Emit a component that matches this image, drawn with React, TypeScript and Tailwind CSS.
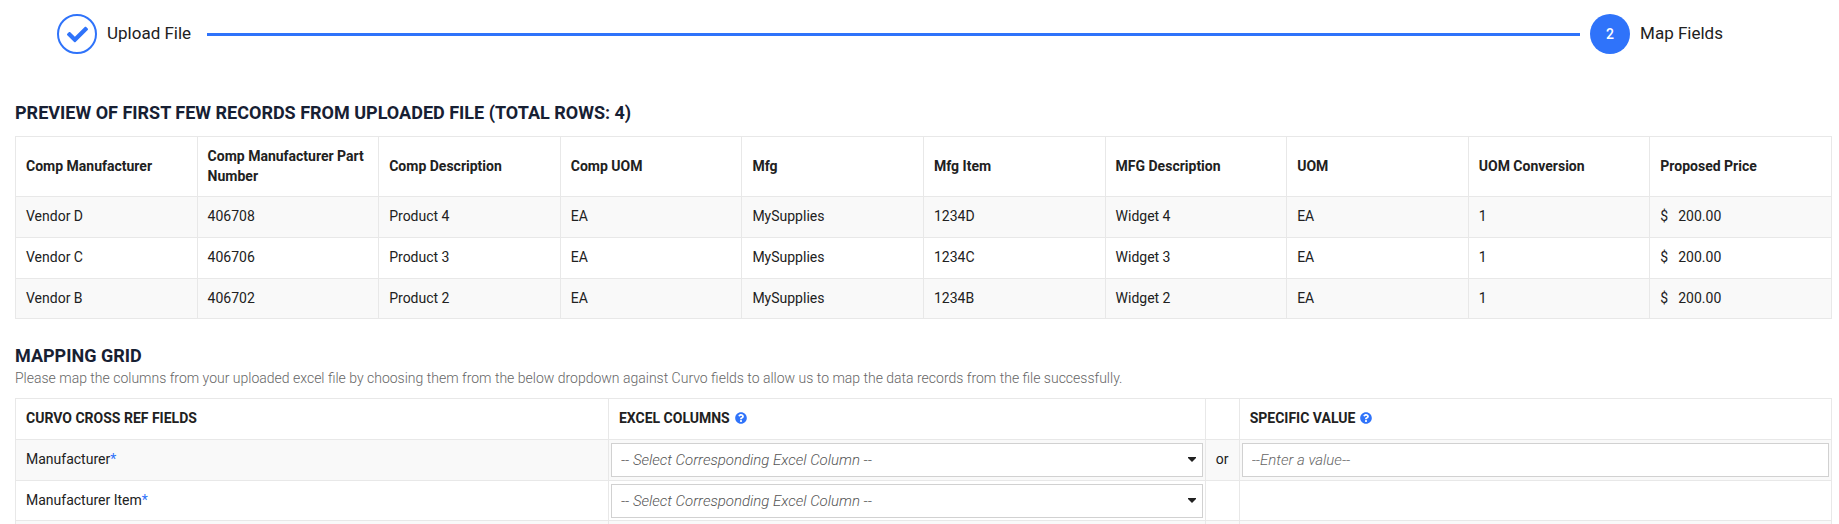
import { FaCheck, FaQuestionCircle } from "react-icons/fa";

const columns = [
  "Comp Manufacturer",
  "Comp Manufacturer Part Number",
  "Comp Description",
  "Comp UOM",
  "Mfg",
  "Mfg Item",
  "MFG Description",
  "UOM",
  "UOM Conversion",
  "Proposed Price",
];

const records = [
  ["Vendor D", "406708", "Product 4", "EA", "MySupplies", "1234D", "Widget 4", "EA", "1", "200.00"],
  ["Vendor C", "406706", "Product 3", "EA", "MySupplies", "1234C", "Widget 3", "EA", "1", "200.00"],
  ["Vendor B", "406702", "Product 2", "EA", "MySupplies", "1234B", "Widget 2", "EA", "1", "200.00"],
];

const fields = [
  { id: "manufacturer", label: "Manufacturer", specific: true },
  { id: "manufacturer-item", label: "Manufacturer Item", specific: false },
];

function Stepper() {
  return (
    <ol className="flex items-center pt-[14px] pr-[116px] pl-[57px] text-[17px] leading-6">
      <li className="flex items-center gap-[10px]">
        <span className="flex size-10 items-center justify-center rounded-full border-2 border-[#2f73fa] text-[#2f73fa]">
          <FaCheck className="size-[21px]" />
        </span>
        <span className="pb-[2px]">Upload File</span>
      </li>
      <li aria-hidden="true" className="mr-[10px] ml-4 h-[3px] flex-1 bg-[#2f73fa]" />
      <li className="flex items-center gap-[10px]">
        <span className="flex size-10 items-center justify-center rounded-full bg-[#2f73fa] text-[14px] font-medium text-white">
          2
        </span>
        <span className="pb-[2px]">Map Fields</span>
      </li>
    </ol>
  );
}

function PreviewTable() {
  return (
    <table className="w-full table-fixed border-collapse text-left">
      <thead>
        <tr className="h-[60px]">
          {columns.map((column) => (
            <th key={column} className="border border-[#e8e8e8] px-[10px] pb-[2px] font-bold">
              {column}
            </th>
          ))}
        </tr>
      </thead>
      <tbody>
        {records.map((record) => (
          <tr key={record[0]} className="h-[41px] odd:bg-[#f9f9f9] last:h-10">
            {record.map((value, i) => (
              <td key={columns[i]} className="border border-[#e8e8e8] px-[10px] pb-[2px]">
                {i === columns.length - 1 && <span className="mr-[10px]">$</span>}
                {value}
              </td>
            ))}
          </tr>
        ))}
      </tbody>
    </table>
  );
}

function HelpButton({ label }: { label: string }) {
  return (
    <button type="button" aria-label={label} className="text-[#2f73fa]">
      <FaQuestionCircle className="size-3" />
    </button>
  );
}

function ColumnSelect({ id }: { id: string }) {
  return (
    <div className="relative">
      <select
        id={id}
        className="block h-[34px] w-full appearance-none border border-[#d1d1d1] bg-white px-[9px] text-[15px] font-light text-[#555] italic"
      >
        <option>-- Select Corresponding Excel Column --</option>
      </select>
      <svg
        viewBox="0 0 8 5"
        className="pointer-events-none absolute top-[14px] right-[7px] h-[5px] w-2"
        fill="#212121"
      >
        <path d="M0 0h8v1L4 5 0 1z" />
      </svg>
    </div>
  );
}

function MappingTable() {
  return (
    <table className="w-full table-fixed border-collapse text-left">
      <colgroup>
        <col className="w-[32.65%]" />
        <col className="w-[32.86%]" />
        <col className="w-[34px]" />
        <col />
      </colgroup>
      <thead>
        <tr className="h-[41px]">
          <th className="border border-[#e8e8e8] px-[10px] pb-[2px] font-bold">CURVO CROSS REF FIELDS</th>
          <th className="border border-[#e8e8e8] px-[10px] pb-[2px] font-bold">
            <div className="flex items-center gap-[5px]">
              EXCEL COLUMNS
              <HelpButton label="About Excel columns" />
            </div>
          </th>
          <td className="border border-[#e8e8e8]" />
          <th className="border border-[#e8e8e8] px-[10px] pb-[2px] font-bold">
            <div className="flex items-center gap-[5px]">
              SPECIFIC VALUE
              <HelpButton label="About specific values" />
            </div>
          </th>
        </tr>
      </thead>
      <tbody>
        {fields.map((field) => (
          <tr key={field.id} className="h-[41px] odd:bg-[#f9f9f9] even:h-10">
            <td className="border border-[#e8e8e8] px-[10px] pb-[2px]">
              <label htmlFor={field.id}>
                {field.label}
                <span className="text-[#2f73fa]">*</span>
              </label>
            </td>
            <td className="border border-[#e8e8e8] px-[2px]">
              <ColumnSelect id={field.id} />
            </td>
            <td className="border border-[#e8e8e8] pb-[2px] text-center">{field.specific && "or"}</td>
            <td className="border border-[#e8e8e8] px-[2px]">
              {field.specific && (
                <input
                  type="text"
                  aria-label={`${field.label} specific value`}
                  placeholder="--Enter a value--"
                  className="block h-[34px] w-full border border-[#d1d1d1] bg-white px-[9px] text-[15px] font-light italic placeholder:text-[#666]"
                />
              )}
            </td>
          </tr>
        ))}
        <tr className="h-[41px] bg-[#f9f9f9]">
          <td className="border border-[#e8e8e8]" />
          <td className="border border-[#e8e8e8]" />
          <td className="border border-[#e8e8e8]" />
          <td className="border border-[#e8e8e8]" />
        </tr>
      </tbody>
    </table>
  );
}

export default function App() {
  return (
    <main className="h-screen overflow-hidden bg-white font-['Roboto',sans-serif] text-[14px] leading-5 text-[#212121]">
      <Stepper />
      <section className="mt-[47px] mr-[7px] ml-[15px]">
        <h2 className="mb-[11px] text-[18px] leading-6 font-bold text-[#172033]">
          PREVIEW OF FIRST FEW RECORDS FROM UPLOADED FILE (TOTAL ROWS: 4)
        </h2>
        <PreviewTable />
      </section>
      <section className="mt-[25px] mr-[7px] ml-[15px]">
        <h2 className="text-[18px] leading-6 font-bold text-[#172033]">MAPPING GRID</h2>
        <p className="mb-[10px] font-light text-[#666]">
          Please map the columns from your uploaded excel file by choosing them from the below dropdown
          against Curvo fields to allow us to map the data records from the file successfully.
        </p>
        <MappingTable />
      </section>
    </main>
  );
}
